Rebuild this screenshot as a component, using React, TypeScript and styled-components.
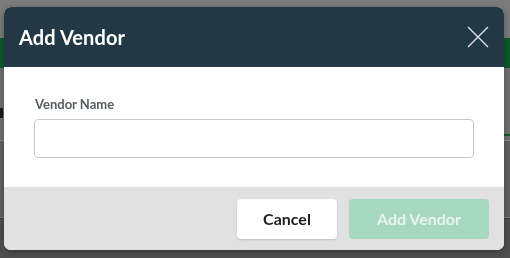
import styled, { createGlobalStyle } from 'styled-components';

const GlobalStyle = createGlobalStyle`
  html, body {
    margin: 0;
    padding: 0;
    height: 100%;
  }
  body {
    font-family: Lato, "Open Sans", Arial, sans-serif;
    background: #6e6e6e;
    overflow: hidden;
  }
  #root {
    height: 100%;
  }
`;

// dimmed page behind the modal
const Page = styled.div`
  height: 100%;
  display: flex;
  flex-direction: column;
`;

const TopBar = styled.div`
  height: 38px;
  background: #7b7b7b;
`;

const GreenBar = styled.div`
  height: 30px;
  background: #0b5a2b;
`;

const Band = styled.div<{ h: number; bg: string; line?: string }>`
  height: ${p => p.h}px;
  background: ${p => p.bg};
  border-bottom: ${p => (p.line ? `1px solid ${p.line}` : 'none')};
  position: relative;
`;

const CutText = styled.div`
  position: absolute;
  left: 0;
  top: 40px;
  width: 3px;
  height: 10px;
  background: #1a1a1a;
`;

const RightStripe = styled.div`
  position: absolute;
  right: 0;
  top: 66px;
  width: 8px;
  height: 2px;
  background: #0b5a2b;
`;

const Bottom = styled.div`
  flex: 1;
  background: #4e4e4e;
  border-top: 1px solid #3e3e3e;
`;

const Overlay = styled.div`
  position: fixed;
  inset: 0;
  display: flex;
  justify-content: center;
  align-items: flex-start;
  padding: 7px 2px 0 0;
`;

const Dialog = styled.div`
  width: 500px;
  border-radius: 7px;
  overflow: hidden;
  background: #fff;
  box-shadow: 0 2px 6px rgba(0, 0, 0, 0.3);
`;

const Header = styled.div`
  height: 60px;
  background: #233845;
  display: flex;
  align-items: center;
  justify-content: space-between;
  padding: 0 15px 0 15px;
`;

const Title = styled.h2`
  margin: 0;
  color: #fff;
  font-size: 20px;
  font-weight: 700;
  letter-spacing: 0.1px;
`;

const CloseButton = styled.button`
  width: 22px;
  height: 22px;
  padding: 0;
  border: 0;
  background: transparent;
  cursor: pointer;
  display: flex;
  align-items: center;
  justify-content: center;
`;

const Body = styled.div`
  padding: 29px 30px 29px 30px;
  display: flex;
  flex-direction: column;
  gap: 7px;
`;

const Label = styled.label`
  font-size: 13px;
  font-weight: 700;
  color: #555b5e;
  padding-left: 1px;
`;

const Input = styled.input`
  height: 39px;
  box-sizing: border-box;
  border: 1px solid #c9c9c9;
  border-radius: 4px;
  padding: 0 12px;
  font-size: 15px;
  font-family: inherit;
  outline: none;
`;

const Footer = styled.div`
  height: 63px;
  background: #e1e1e1;
  display: flex;
  align-items: center;
  justify-content: flex-end;
  gap: 12px;
  padding: 0 15px;
`;

const Button = styled.button<{ primary?: boolean }>`
  height: 40px;
  width: ${p => (p.primary ? 140 : 100)}px;
  border: 0;
  border-radius: 4px;
  font-family: inherit;
  font-size: 16px;
  font-weight: 700;
  background: ${p => (p.primary ? '#a9d8c2' : '#fff')};
  color: ${p => (p.primary ? '#e6f4ed' : '#1d1d1d')};
  box-shadow: ${p => (p.primary ? 'none' : '0 1px 2px rgba(0,0,0,0.15)')};
  cursor: pointer;
`;

function App() {
  return (
    <>
      <GlobalStyle />
      <Page>
        <TopBar />
        <GreenBar />
        <Band h={72} bg="#707070" line="#8a8a8a">
          <CutText />
          <RightStripe />
        </Band>
        <Band h={76} bg="#606060" line="#7a7a7a" />
        <Bottom />
      </Page>
      <Overlay>
        <Dialog>
          <Header>
            <Title>Add Vendor</Title>
            <CloseButton aria-label="Close">
              <svg width="22" height="22" viewBox="0 0 22 22">
                <path d="M1 1 L21 21 M21 1 L1 21" stroke="#e4e8ea" strokeWidth="1.3" />
              </svg>
            </CloseButton>
          </Header>
          <Body>
            <Label>Vendor Name</Label>
            <Input />
          </Body>
          <Footer>
            <Button>Cancel</Button>
            <Button primary>Add Vendor</Button>
          </Footer>
        </Dialog>
      </Overlay>
    </>
  );
}

export default App;
